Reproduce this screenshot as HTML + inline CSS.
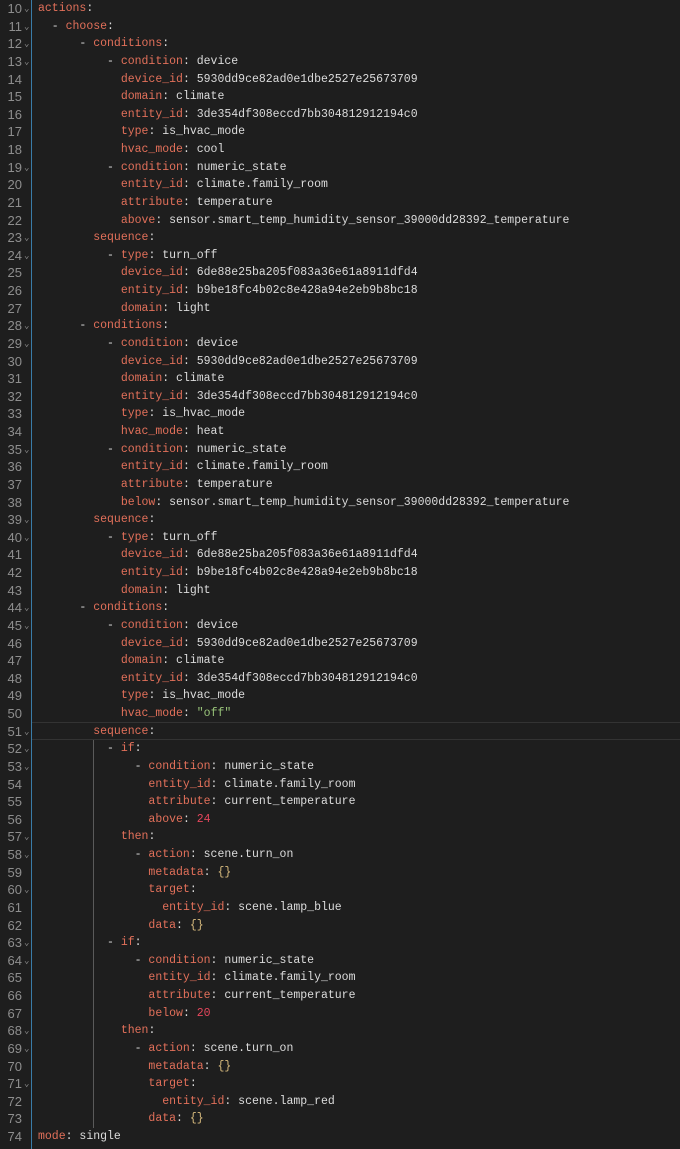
<!DOCTYPE html>
<html><head><meta charset="utf-8"><style>
html,body{margin:0;padding:0;background:#1e1e1e;width:680px;height:1149px;overflow:hidden;font-family:"Liberation Mono",monospace;font-size:11.5px;color:#dcdcdc}
.gut{position:absolute;left:31px;top:0;width:1px;height:1149px;background:#3a7ca8}
.l{position:absolute;left:0;height:17.625px;line-height:17.625px;width:680px;white-space:pre}
.n{position:absolute;left:0;width:22px;text-align:right;color:#8e8e8e;font-family:"Liberation Sans",sans-serif;font-size:13px}
.f{position:absolute;left:24px;top:1px;color:#8a8a8a;font-size:9px}
.c{position:absolute;left:38px}
.k{color:#e2705a}
.s{color:#98c379}
.d{color:#e5465c}
.b{color:#d7ba7d}
.hl{position:absolute;left:32px;width:648px;height:16px;border-top:1px solid #333;border-bottom:1px solid #333}
.g{position:absolute;left:93px;width:1px;background:#5a5a5a}
</style></head><body>
<div class="gut"></div>
<div class="hl" style="top:722px"></div>
<div class="g" style="top:740px;height:388px"></div>
<div style="position:absolute;left:0;top:0;width:680px;height:1149px">
<div class="l" style="top:0px"><span class="n">10</span><span class="f">⌄</span><span class="c"><span class="k">actions</span>:</span></div>
<div class="l" style="top:17.6px"><span class="n">11</span><span class="f">⌄</span><span class="c">  - <span class="k">choose</span>:</span></div>
<div class="l" style="top:35.3px"><span class="n">12</span><span class="f">⌄</span><span class="c">      - <span class="k">conditions</span>:</span></div>
<div class="l" style="top:52.9px"><span class="n">13</span><span class="f">⌄</span><span class="c">          - <span class="k">condition</span>: device</span></div>
<div class="l" style="top:70.5px"><span class="n">14</span><span class="c">            <span class="k">device_id</span>: 5930dd9ce82ad0e1dbe2527e25673709</span></div>
<div class="l" style="top:88.1px"><span class="n">15</span><span class="c">            <span class="k">domain</span>: climate</span></div>
<div class="l" style="top:105.8px"><span class="n">16</span><span class="c">            <span class="k">entity_id</span>: 3de354df308eccd7bb304812912194c0</span></div>
<div class="l" style="top:123.4px"><span class="n">17</span><span class="c">            <span class="k">type</span>: is_hvac_mode</span></div>
<div class="l" style="top:141px"><span class="n">18</span><span class="c">            <span class="k">hvac_mode</span>: cool</span></div>
<div class="l" style="top:158.6px"><span class="n">19</span><span class="f">⌄</span><span class="c">          - <span class="k">condition</span>: numeric_state</span></div>
<div class="l" style="top:176.3px"><span class="n">20</span><span class="c">            <span class="k">entity_id</span>: climate.family_room</span></div>
<div class="l" style="top:193.9px"><span class="n">21</span><span class="c">            <span class="k">attribute</span>: temperature</span></div>
<div class="l" style="top:211.5px"><span class="n">22</span><span class="c">            <span class="k">above</span>: sensor.smart_temp_humidity_sensor_39000dd28392_temperature</span></div>
<div class="l" style="top:229.1px"><span class="n">23</span><span class="f">⌄</span><span class="c">        <span class="k">sequence</span>:</span></div>
<div class="l" style="top:246.8px"><span class="n">24</span><span class="f">⌄</span><span class="c">          - <span class="k">type</span>: turn_off</span></div>
<div class="l" style="top:264.4px"><span class="n">25</span><span class="c">            <span class="k">device_id</span>: 6de88e25ba205f083a36e61a8911dfd4</span></div>
<div class="l" style="top:282px"><span class="n">26</span><span class="c">            <span class="k">entity_id</span>: b9be18fc4b02c8e428a94e2eb9b8bc18</span></div>
<div class="l" style="top:299.6px"><span class="n">27</span><span class="c">            <span class="k">domain</span>: light</span></div>
<div class="l" style="top:317.3px"><span class="n">28</span><span class="f">⌄</span><span class="c">      - <span class="k">conditions</span>:</span></div>
<div class="l" style="top:334.9px"><span class="n">29</span><span class="f">⌄</span><span class="c">          - <span class="k">condition</span>: device</span></div>
<div class="l" style="top:352.5px"><span class="n">30</span><span class="c">            <span class="k">device_id</span>: 5930dd9ce82ad0e1dbe2527e25673709</span></div>
<div class="l" style="top:370.1px"><span class="n">31</span><span class="c">            <span class="k">domain</span>: climate</span></div>
<div class="l" style="top:387.8px"><span class="n">32</span><span class="c">            <span class="k">entity_id</span>: 3de354df308eccd7bb304812912194c0</span></div>
<div class="l" style="top:405.4px"><span class="n">33</span><span class="c">            <span class="k">type</span>: is_hvac_mode</span></div>
<div class="l" style="top:423px"><span class="n">34</span><span class="c">            <span class="k">hvac_mode</span>: heat</span></div>
<div class="l" style="top:440.6px"><span class="n">35</span><span class="f">⌄</span><span class="c">          - <span class="k">condition</span>: numeric_state</span></div>
<div class="l" style="top:458.3px"><span class="n">36</span><span class="c">            <span class="k">entity_id</span>: climate.family_room</span></div>
<div class="l" style="top:475.9px"><span class="n">37</span><span class="c">            <span class="k">attribute</span>: temperature</span></div>
<div class="l" style="top:493.5px"><span class="n">38</span><span class="c">            <span class="k">below</span>: sensor.smart_temp_humidity_sensor_39000dd28392_temperature</span></div>
<div class="l" style="top:511.1px"><span class="n">39</span><span class="f">⌄</span><span class="c">        <span class="k">sequence</span>:</span></div>
<div class="l" style="top:528.8px"><span class="n">40</span><span class="f">⌄</span><span class="c">          - <span class="k">type</span>: turn_off</span></div>
<div class="l" style="top:546.4px"><span class="n">41</span><span class="c">            <span class="k">device_id</span>: 6de88e25ba205f083a36e61a8911dfd4</span></div>
<div class="l" style="top:564px"><span class="n">42</span><span class="c">            <span class="k">entity_id</span>: b9be18fc4b02c8e428a94e2eb9b8bc18</span></div>
<div class="l" style="top:581.6px"><span class="n">43</span><span class="c">            <span class="k">domain</span>: light</span></div>
<div class="l" style="top:599.3px"><span class="n">44</span><span class="f">⌄</span><span class="c">      - <span class="k">conditions</span>:</span></div>
<div class="l" style="top:616.9px"><span class="n">45</span><span class="f">⌄</span><span class="c">          - <span class="k">condition</span>: device</span></div>
<div class="l" style="top:634.5px"><span class="n">46</span><span class="c">            <span class="k">device_id</span>: 5930dd9ce82ad0e1dbe2527e25673709</span></div>
<div class="l" style="top:652.1px"><span class="n">47</span><span class="c">            <span class="k">domain</span>: climate</span></div>
<div class="l" style="top:669.8px"><span class="n">48</span><span class="c">            <span class="k">entity_id</span>: 3de354df308eccd7bb304812912194c0</span></div>
<div class="l" style="top:687.4px"><span class="n">49</span><span class="c">            <span class="k">type</span>: is_hvac_mode</span></div>
<div class="l" style="top:705px"><span class="n">50</span><span class="c">            <span class="k">hvac_mode</span>: <span class="s">"off"</span></span></div>
<div class="l" style="top:722.6px"><span class="n">51</span><span class="f">⌄</span><span class="c">        <span class="k">sequence</span>:</span></div>
<div class="l" style="top:740.3px"><span class="n">52</span><span class="f">⌄</span><span class="c">          - <span class="k">if</span>:</span></div>
<div class="l" style="top:757.9px"><span class="n">53</span><span class="f">⌄</span><span class="c">              - <span class="k">condition</span>: numeric_state</span></div>
<div class="l" style="top:775.5px"><span class="n">54</span><span class="c">                <span class="k">entity_id</span>: climate.family_room</span></div>
<div class="l" style="top:793.1px"><span class="n">55</span><span class="c">                <span class="k">attribute</span>: current_temperature</span></div>
<div class="l" style="top:810.8px"><span class="n">56</span><span class="c">                <span class="k">above</span>: <span class="d">24</span></span></div>
<div class="l" style="top:828.4px"><span class="n">57</span><span class="f">⌄</span><span class="c">            <span class="k">then</span>:</span></div>
<div class="l" style="top:846px"><span class="n">58</span><span class="f">⌄</span><span class="c">              - <span class="k">action</span>: scene.turn_on</span></div>
<div class="l" style="top:863.6px"><span class="n">59</span><span class="c">                <span class="k">metadata</span>: <span class="b">{}</span></span></div>
<div class="l" style="top:881.3px"><span class="n">60</span><span class="f">⌄</span><span class="c">                <span class="k">target</span>:</span></div>
<div class="l" style="top:898.9px"><span class="n">61</span><span class="c">                  <span class="k">entity_id</span>: scene.lamp_blue</span></div>
<div class="l" style="top:916.5px"><span class="n">62</span><span class="c">                <span class="k">data</span>: <span class="b">{}</span></span></div>
<div class="l" style="top:934.1px"><span class="n">63</span><span class="f">⌄</span><span class="c">          - <span class="k">if</span>:</span></div>
<div class="l" style="top:951.8px"><span class="n">64</span><span class="f">⌄</span><span class="c">              - <span class="k">condition</span>: numeric_state</span></div>
<div class="l" style="top:969.4px"><span class="n">65</span><span class="c">                <span class="k">entity_id</span>: climate.family_room</span></div>
<div class="l" style="top:987px"><span class="n">66</span><span class="c">                <span class="k">attribute</span>: current_temperature</span></div>
<div class="l" style="top:1004.6px"><span class="n">67</span><span class="c">                <span class="k">below</span>: <span class="d">20</span></span></div>
<div class="l" style="top:1022.3px"><span class="n">68</span><span class="f">⌄</span><span class="c">            <span class="k">then</span>:</span></div>
<div class="l" style="top:1039.9px"><span class="n">69</span><span class="f">⌄</span><span class="c">              - <span class="k">action</span>: scene.turn_on</span></div>
<div class="l" style="top:1057.5px"><span class="n">70</span><span class="c">                <span class="k">metadata</span>: <span class="b">{}</span></span></div>
<div class="l" style="top:1075.1px"><span class="n">71</span><span class="f">⌄</span><span class="c">                <span class="k">target</span>:</span></div>
<div class="l" style="top:1092.8px"><span class="n">72</span><span class="c">                  <span class="k">entity_id</span>: scene.lamp_red</span></div>
<div class="l" style="top:1110.4px"><span class="n">73</span><span class="c">                <span class="k">data</span>: <span class="b">{}</span></span></div>
<div class="l" style="top:1128px"><span class="n">74</span><span class="c"><span class="k">mode</span>: single</span></div>
</div>
</body></html>
